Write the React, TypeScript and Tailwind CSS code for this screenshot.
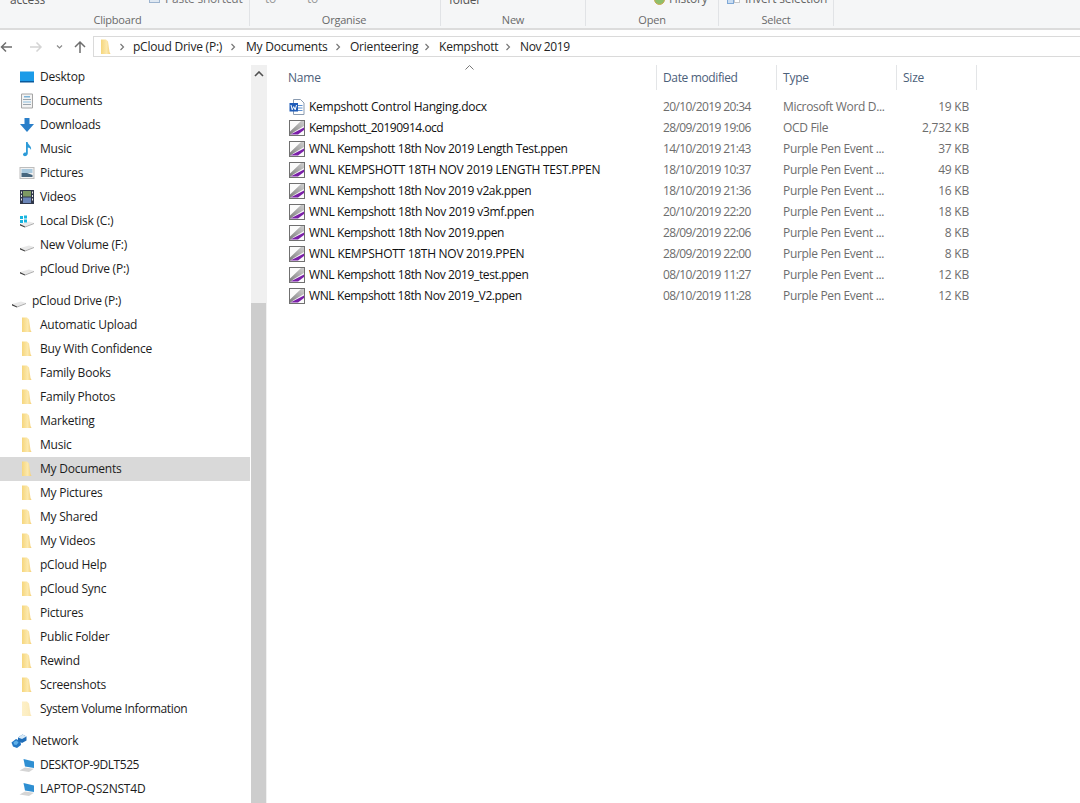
import React from "react";

const Folder = ({ pale }: { pale?: boolean }) => (
  <svg width="16" height="16" viewBox="0 0 16 16" className="shrink-0">
    <defs>
      <linearGradient id={pale ? "fp" : "fy"} x1="0" y1="0" x2="1" y2="0">
        <stop offset="0" stopColor={pale ? "#fdf0c8" : "#f6d67c"} />
        <stop offset="0.6" stopColor={pale ? "#fcedc0" : "#fce9ae"} />
        <stop offset="1" stopColor={pale ? "#f9e6b6" : "#f4cd72"} />
      </linearGradient>
    </defs>
    <path d="M3 0.5 H8 L10 2.5 L11.5 13 L12.5 15 H3 Z" fill={`url(#${pale ? "fp" : "fy"})`} />
  </svg>
);

const Drive = ({ win }: { win?: boolean }) => (
  <svg width="16" height="16" viewBox="0 0 16 16" className="shrink-0">
    <path d="M1 11 L10 8.5 L15 10 L6 13.5 Z" fill="#e8e8e8" />
    <path d="M1 11 L6 13.5 L6 14.5 L1 12.5 Z" fill="#3c3c3c" />
    <path d="M6 13.5 L15 10 L15 11 L6 14.5 Z" fill="#a9a9a9" />
    {win && (
      <g fill="#19b5e0">
        <rect x="1" y="3" width="3" height="3" />
        <rect x="5" y="2.5" width="3" height="3" />
        <rect x="1" y="7" width="3" height="3" />
        <rect x="5" y="6.5" width="3" height="3" />
      </g>
    )}
  </svg>
);

const Desktop = () => (
  <svg width="16" height="16" viewBox="0 0 16 16" className="shrink-0">
    <rect x="1" y="2.5" width="14" height="10" fill="#1b9be8" />
    <rect x="1" y="12" width="14" height="1.5" fill="#0a5a9c" />
  </svg>
);
const Documents = () => (
  <svg width="16" height="16" viewBox="0 0 16 16" className="shrink-0">
    <path d="M2.5 1 H13.5 V15 H2.5 Z" fill="#f3f3f3" stroke="#a5a5a5" />
    <rect x="5" y="3" width="6" height="1.5" fill="#7db4d8" />
    <rect x="4" y="6" width="8" height="1" fill="#9aa5ad" />
    <rect x="4" y="8.5" width="8" height="1" fill="#8fc0de" />
    <rect x="4" y="11" width="8" height="1" fill="#9aa5ad" />
  </svg>
);
const Downloads = () => (
  <svg width="16" height="16" viewBox="0 0 16 16" className="shrink-0">
    <path d="M5.5 1 H10.5 V7 H15 L8 15 L1 7 H5.5 Z" fill="#2a7fc9" />
  </svg>
);
const Music = () => (
  <svg width="16" height="16" viewBox="0 0 16 16" className="shrink-0">
    <path d="M7 1 H8.6 C9 4 13 5 12 9 C11.5 7.5 10.5 6.8 8.8 6.5 V12.5 C8.8 14.5 6.5 15.5 5 15 C3.5 14.4 3.8 12.5 5.2 11.8 C5.8 11.5 6.5 11.4 7 11.6 Z" fill="#2d9bd8" />
  </svg>
);
const Pictures = () => (
  <svg width="16" height="16" viewBox="0 0 16 16" className="shrink-0">
    <rect x="1" y="2.5" width="14" height="11" fill="#f2f2f2" stroke="#bdbdbd" />
    <rect x="2.5" y="4" width="11" height="4" fill="#a9c9de" />
    <path d="M2.5 12 V8 L8 8 L13.5 10 V12 Z" fill="#46667e" />
  </svg>
);
const Videos = () => (
  <svg width="16" height="16" viewBox="0 0 16 16" className="shrink-0">
    <rect x="1" y="1" width="14" height="14" fill="#30384a" />
    <rect x="4" y="2" width="8" height="5.5" fill="#7d9a63" />
    <rect x="4" y="8.5" width="8" height="5.5" fill="#6b86b8" />
    <g fill="#e8e8e8">
      <rect x="2" y="2.5" width="1" height="2" />
      <rect x="2" y="6" width="1" height="2" />
      <rect x="2" y="9.5" width="1" height="2" />
      <rect x="13" y="2.5" width="1" height="2" />
      <rect x="13" y="6" width="1" height="2" />
      <rect x="13" y="9.5" width="1" height="2" />
    </g>
  </svg>
);
const Network = () => (
  <svg width="16" height="16" viewBox="0 0 16 16" className="shrink-0">
    <path d="M0.5 9.5 L5 6 L9.5 8 L10 12 L6 15 L2 13.5 Z" fill="#2478c4" />
    <path d="M2.5 9 L5.5 7.5 L7.5 9.5 L5.5 12 L3 11.5 Z" fill="#5fb0e8" />
    <path d="M7 4.5 L11.5 1.5 L15.5 3.5 L15.5 7.5 L11 10 L7 7.5 Z" fill="#1f6db8" />
    <path d="M7 4.5 L11.5 1.5 L15.5 3.5 L11 6 Z" fill="#d7e9f6" />
  </svg>
);
const Laptop = () => (
  <svg width="16" height="16" viewBox="0 0 16 16" className="shrink-0">
    <path d="M4.5 2 L15 4.5 V11 L6 9.5 Z" fill="#2f8fd2" />
    <path d="M0.5 13.5 L6 10.5 L15 11.8 L10 15 Z" fill="#d5d5d5" />
  </svg>
);
const Word = () => (
  <svg width="16" height="16" viewBox="0 0 16 16" className="shrink-0">
    <path d="M4.5 0.5 H11.5 L15 4 V15.5 H4.5 Z" fill="#fff" stroke="#8a9bb0" />
    <rect x="9" y="6" width="4.5" height="1" fill="#5b8fd0" />
    <rect x="9" y="8.5" width="4.5" height="1" fill="#5b8fd0" />
    <rect x="9" y="11" width="4.5" height="1" fill="#5b8fd0" />
    <rect x="0.5" y="4" width="8.5" height="8.5" fill="#1f5cb8" />
    <path d="M2 6 L3.2 10.8 L4.7 7.6 L6.2 10.8 L7.5 6" fill="none" stroke="#fff" strokeWidth="1" />
  </svg>
);
const Ppen = () => (
  <svg width="16" height="16" viewBox="0 0 16 16" className="shrink-0">
    <defs>
      <linearGradient id="pg" x1="0" y1="1" x2="1" y2="0">
        <stop offset="0" stopColor="#7c7c7c" />
        <stop offset="1" stopColor="#cfcfcf" />
      </linearGradient>
    </defs>
    <rect x="0.5" y="0.5" width="15" height="15" fill="#fbfbfb" stroke="#707070" />
    <path d="M1 11.5 L12 1 H15 V6 L5 12 L1 15 Z" fill="url(#pg)" />
    <path d="M1.5 14.5 L15 7.5 V10 L9 14.5 Z" fill="#7a1fa8" />
  </svg>
);

const quick: [string, React.ReactNode][] = [
  ["Desktop", <Desktop />],
  ["Documents", <Documents />],
  ["Downloads", <Downloads />],
  ["Music", <Music />],
  ["Pictures", <Pictures />],
  ["Videos", <Videos />],
  ["Local Disk (C:)", <Drive win />],
  ["New Volume (F:)", <Drive />],
  ["pCloud Drive (P:)", <Drive />],
];
const folders = [
  "Automatic Upload",
  "Buy With Confidence",
  "Family Books",
  "Family Photos",
  "Marketing",
  "Music",
  "My Documents",
  "My Pictures",
  "My Shared",
  "My Videos",
  "pCloud Help",
  "pCloud Sync",
  "Pictures",
  "Public Folder",
  "Rewind",
  "Screenshots",
  "System Volume Information",
];
const files: [string, string, string, string, string][] = [
  ["Kempshott Control Hanging.docx", "20/10/2019 20:34", "Microsoft Word D...", "19 KB", "tracking-[-0.25px]"],
  ["Kempshott_20190914.ocd", "28/09/2019 19:06", "OCD File", "2,732 KB", "tracking-[-0.49px]"],
  ["WNL Kempshott 18th Nov 2019 Length Test.ppen", "14/10/2019 21:43", "Purple Pen Event ...", "37 KB", "tracking-[-0.38px]"],
  ["WNL KEMPSHOTT 18TH NOV 2019 LENGTH TEST.PPEN", "18/10/2019 10:37", "Purple Pen Event ...", "49 KB", "tracking-[-0.27px]"],
  ["WNL Kempshott 18th Nov 2019 v2ak.ppen", "18/10/2019 21:36", "Purple Pen Event ...", "16 KB", "tracking-[-0.38px]"],
  ["WNL Kempshott 18th Nov 2019 v3mf.ppen", "20/10/2019 22:20", "Purple Pen Event ...", "18 KB", "tracking-[-0.36px]"],
  ["WNL Kempshott 18th Nov 2019.ppen", "28/09/2019 22:06", "Purple Pen Event ...", "8 KB", "tracking-[-0.38px]"],
  ["WNL KEMPSHOTT 18TH NOV 2019.PPEN", "28/09/2019 22:00", "Purple Pen Event ...", "8 KB", "tracking-[-0.28px]"],
  ["WNL Kempshott 18th Nov 2019_test.ppen", "08/10/2019 11:27", "Purple Pen Event ...", "12 KB", "tracking-[-0.38px]"],
  ["WNL Kempshott 18th Nov 2019_V2.ppen", "08/10/2019 11:28", "Purple Pen Event ...", "12 KB", "tracking-[-0.39px]"],
];

const Crumb = () => (
  <svg width="6" height="8" viewBox="0 0 6 8" className="shrink-0">
    <path d="M1.5 1 L4.5 4 L1.5 7" fill="none" stroke="#777" strokeWidth="1.2" />
  </svg>
);

const NavRow = ({ icon, label, selected, cls }: { icon: React.ReactNode; label: string; selected?: boolean; cls?: string }) => (
  <div className={`h-6 w-[250px] flex items-center pl-[19px] gap-[5px] ${selected ? "bg-[#d9d9d9]" : ""}`}>
    {icon}
    <span className={cls}>{label}</span>
  </div>
);

const Group = ({ w, label, cls }: { w: string; label: string; cls?: string }) => (
  <div className={`${w} h-[26px] border-r border-[#e1e3e6] flex items-end justify-center pb-[1px] text-[#6a6a6a] text-[11px] ${cls ?? ""}`}>
    {label}
  </div>
);

export default function App() {
  return (
    <div className="w-[1080px] h-[803px] overflow-hidden bg-white text-[#1c1c1c] text-[12px] leading-none tracking-[-0.22px] font-['Open_Sans','Noto_Sans',sans-serif] flex flex-col">
      {/* Ribbon */}
      <div className="h-[30px] shrink-0 bg-[#f5f6f7] border-b-2 border-[#dcdcdc] relative overflow-hidden flex">
        <Group w="w-[250px]" label="Clipboard" cls="pr-[14px]" />
        <Group w="w-[191px]" label="Organise" cls="pr-[2px]" />
        <Group w="w-[145px]" label="New" />
        <Group w="w-[133px]" label="Open" />
        <Group w="w-[115px]" label="Select" />
        <span className="absolute left-[10px] top-[-6px] text-[#555]">access</span>
        <span className="absolute left-[149px] top-[-9px] w-[11px] h-[12px] bg-[#dfe8f2] border border-[#9db4cf]" />
        <span className="absolute left-[165px] top-[-7px] text-[#777]">Paste shortcut</span>
        <span className="absolute left-[265px] top-[-7px] text-[#999]">to</span>
        <span className="absolute left-[307px] top-[-7px] text-[#999]">to</span>
        <span className="absolute left-[449px] top-[-6px] text-[#555]">folder</span>
        <span className="absolute left-[654px] top-[-6px] w-[11px] h-[11px] rounded-full bg-[#8fbf6a] border border-[#c9a94f]" />
        <span className="absolute left-[669px] top-[-7px] text-[#666]">History</span>
        <span className="absolute left-[727px] top-[-8px] w-[7px] h-[12px] bg-[#c9ddf2] border border-[#7fa8d6]" />
        <span className="absolute left-[734px] top-[-8px] w-[6px] h-[11px] bg-white border border-[#c8c8c8]" />
        <span className="absolute left-[745px] top-[-7px] text-[#666]">Invert selection</span>
      </div>

      {/* Address bar */}
      <div className="h-[35px] shrink-0 flex items-start pt-[6px]">
        <div className="w-[93px] shrink-0 flex items-center h-[21px] relative">
          <svg width="93" height="20" viewBox="0 0 93 20">
            <path d="M12 10 H1.5 M6 5.5 L1.5 10 L6 14.5" fill="none" stroke="#6e6e6e" strokeWidth="1.5" />
            <path d="M30 10 H41 M36.5 5.5 L41 10 L36.5 14.5" fill="none" stroke="#d4d4d4" strokeWidth="1.5" />
            <path d="M57 8.5 L59.5 11 L62 8.5" fill="none" stroke="#8a8a8a" strokeWidth="1.2" />
            <path d="M80 16 V5 M75 10 L80 5 L85 10" fill="none" stroke="#6e6e6e" strokeWidth="1.5" />
          </svg>
        </div>
        <div className="flex-1 h-[21px] border border-[#dadada] border-r-0 flex items-center text-[#222]">
          <span className="ml-[4px] w-[13px]"><Folder /></span>
          <span className="ml-[8px]"><Crumb /></span>
          <span className="ml-[8px] w-[97px] whitespace-nowrap">pCloud Drive (P:)</span>
          <Crumb />
          <span className="ml-[10px] w-[89px] whitespace-nowrap">My Documents</span>
          <Crumb />
          <span className="ml-[9px] w-[74px] whitespace-nowrap">Orienteering</span>
          <Crumb />
          <span className="ml-[9px] w-[66px] whitespace-nowrap">Kempshott</span>
          <Crumb />
          <span className="ml-[9px] whitespace-nowrap tracking-[-0.4px]">Nov 2019</span>
        </div>
      </div>

      {/* Body */}
      <div className="flex-1 flex min-h-0">
        <div className="w-[251px] shrink-0 flex flex-col">
          {quick.map(([l, i]) => (
            <NavRow key={l} label={l} icon={i} />
          ))}
          <div className="h-6 mt-2 flex items-center pl-[11px] gap-[5px]">
            <Drive />
            <span>pCloud Drive (P:)</span>
          </div>
          {folders.map((f) => (
            <NavRow
              key={f}
              label={f}
              selected={f === "My Documents"}
              cls={f === "System Volume Information" ? "tracking-[-0.34px]" : undefined}
              icon={<Folder pale={f === "System Volume Information"} />}
            />
          ))}
          <div className="h-6 mt-2 flex items-center pl-[11px] gap-[5px]">
            <Network />
            <span>Network</span>
          </div>
          <NavRow label="DESKTOP-9DLT525" cls="tracking-[-0.42px]" icon={<Laptop />} />
          <NavRow label="LAPTOP-QS2NST4D" icon={<Laptop />} />
        </div>

        {/* Scrollbar */}
        <div className="w-[16px] shrink-0 bg-[#f0f0f0] flex flex-col">
          <div className="h-[238px] flex justify-center pt-[6px]">
            <svg width="10" height="6" viewBox="0 0 10 6">
              <path d="M1 5 L5 1 L9 5" fill="none" stroke="#505050" strokeWidth="1.6" />
            </svg>
          </div>
          <div className="flex-1 bg-[#cdcdcd] w-[15px]" />
        </div>

        {/* File list */}
        <div className="flex-1 min-w-0 relative">
          <svg width="9" height="5" viewBox="0 0 9 5" className="absolute left-[198px] top-[0px]">
            <path d="M0.5 4.5 L4.5 0.5 L8.5 4.5" fill="none" stroke="#777" />
          </svg>
          <div className="h-[25px] flex items-center text-[#4c607a] pl-[21px]">
            <div className="w-[368px] h-full flex items-center">Name</div>
            <div className="w-[120px] h-full flex items-center pl-[6px] border-l border-[#e3e5e7] tracking-[-0.37px]">Date modified</div>
            <div className="w-[120px] h-full flex items-center pl-[6px] border-l border-[#e3e5e7]">Type</div>
            <div className="w-[81px] h-full flex items-center pl-[6px] border-x border-[#e3e5e7]">Size</div>
          </div>
          <div className="pl-[22px] pt-[6px]">
            {files.map(([n, d, t, s, tr], i) => (
              <div key={n} className="h-[21px] flex items-center">
                <div className="w-[367px] flex items-center gap-[4px] whitespace-nowrap text-[#111]">
                  {i === 0 ? <Word /> : <Ppen />}
                  <span className={tr}>{n}</span>
                </div>
                <div className="w-[120px] pl-[7px] text-[#6d6d6d] tracking-[-0.6px]">{d}</div>
                <div className="w-[120px] pl-[7px] text-[#6d6d6d] whitespace-nowrap tracking-[-0.33px]">{t}</div>
                <div className="w-[73px] text-right text-[#6d6d6d]">{s}</div>
              </div>
            ))}
          </div>
        </div>
      </div>
    </div>
  );
}
